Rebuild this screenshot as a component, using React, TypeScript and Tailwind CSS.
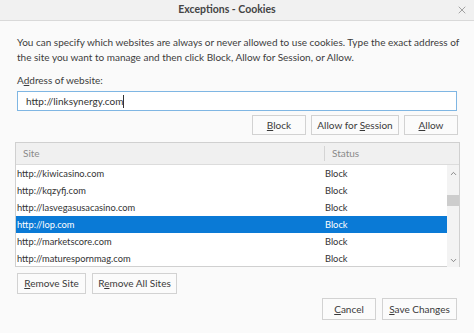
import { X, ChevronUp, ChevronDown } from "lucide-react";

const sites = [
  "http://kiwicasino.com",
  "http://kqzyfj.com",
  "http://lasvegasusacasino.com",
  "http://lop.com",
  "http://marketscore.com",
  "http://maturespornmag.com",
];

const Btn = ({ children, className = "" }: { children: React.ReactNode; className?: string }) => (
  <button
    className={
      "flex items-center justify-center border border-[#d2d2d2] bg-[#fbfbfb] text-[#3a3a3a] text-[10px] " +
      className
    }
  >
    <span className="whitespace-nowrap">{children}</span>
  </button>
);

export default function App() {
  return (
    <div
      className="w-[474px] h-[333px] flex flex-col bg-[#fafafa] text-[#333] overflow-hidden"
      style={{ fontFamily: 'Lato, "Noto Sans", sans-serif' }}
    >
      <div className="h-[21px] flex items-center justify-center relative bg-[#f1f1f1] border-b border-[#d9d9d9] pr-[20px]">
        <span className="text-[10.5px] font-bold text-[#444]">Exceptions - Cookies</span>
        <X size={12} strokeWidth={1.3} className="absolute right-[6px] top-[4px] text-[#777]" />
      </div>

      <div className="flex flex-col px-[17px]">
        <p className="mt-[14px] text-[10px] leading-[15px] text-[#3c3c3c] whitespace-nowrap">
          You can specify which websites are always or never allowed to use cookies. Type the exact address of
          <br />
          the site you want to manage and then click Block, Allow for Session, or Allow.
        </p>

        <label className="mt-[7px] text-[10px] leading-[16px] text-[#3c3c3c]">
          A<span className="underline">d</span>dress of website:
        </label>

        <div className="mt-[3px] h-[20px] w-[440px] border border-[#7fb6e3] bg-white flex items-center pl-[8px] text-[10px] text-[#333]">
          http://linksynergy.com<span className="w-px h-[13px] bg-[#333]" />
        </div>

        <div className="mt-[4px] flex justify-end gap-[5px] w-[441px]">
          <Btn className="w-[54px] h-[20px]">
            <span className="underline">B</span>lock
          </Btn>
          <Btn className="w-[88px] h-[20px]">
            Allow for <span className="underline">S</span>ession
          </Btn>
          <Btn className="w-[54px] h-[20px]">
            <span className="underline">A</span>llow
          </Btn>
        </div>

        <div className="mt-[7px] -ml-[2px] w-[445px] h-[125px] border border-[#d0d0d0] bg-white flex flex-col">
          <div className="h-[22px] flex bg-[#f0f0f0] border-b border-[#dcdcdc] text-[10px] text-[#8a8a8a]">
            <div className="w-[308px] pl-[7px] flex items-center">Site</div>
            <div className="flex-1 border-l border-[#d4d4d4] my-[3px] pl-[7px] flex items-center">Status</div>
          </div>
          <div className="flex flex-1">
            <div className="flex flex-col w-[431px]">
              {sites.map((s, i) => (
                <div
                  key={s}
                  className={
                    "h-[17px] flex items-center text-[9.3px] " +
                    (i === 3 ? "bg-[#0a7ad6] text-white" : "text-[#333]")
                  }
                >
                  <span className="w-[309px] pl-[1px]">{s}</span>
                  <span>Block</span>
                </div>
              ))}
            </div>
            <div className="flex-1 bg-[#f3f3f3] flex flex-col items-center relative">
              <ChevronUp size={9} strokeWidth={2} className="mt-[4px] text-[#666]" />
              <div className="absolute top-[30px] left-0 w-full h-[11px] bg-[#cdcdcd]" />
              <ChevronDown size={9} strokeWidth={2} className="mt-auto mb-[2px] text-[#666]" />
            </div>
          </div>
        </div>

        <div className="mt-[6px] flex gap-[6px]">
          <Btn className="w-[69px] h-[21px]">
            <span className="underline">R</span>emove Site
          </Btn>
          <Btn className="w-[85px] h-[21px]">
            R<span className="underline">e</span>move All Sites
          </Btn>
        </div>

        <div className="mt-[4px] flex justify-end gap-[6px] w-[440px]">
          <Btn className="w-[54px] h-[22px]">
            <span className="underline">C</span>ancel
          </Btn>
          <Btn className="w-[75px] h-[22px]">
            <span className="underline">S</span>ave Changes
          </Btn>
        </div>
      </div>
    </div>
  );
}
